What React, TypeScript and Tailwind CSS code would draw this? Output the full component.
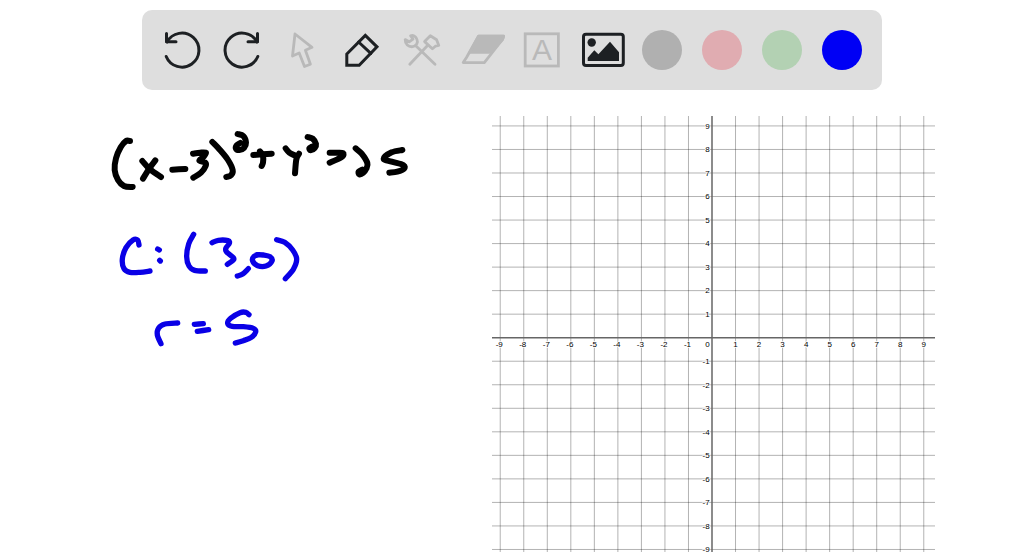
import { useState } from "react";
import type { ReactNode } from "react";

type Point = [number, number];
type Tool = { id: string; label: string; muted?: boolean; icon: ReactNode };

// --- TOOLBAR ---
const TOOLS: Tool[] = [
  {
    id: "undo",
    label: "Undo",
    icon: (
      <>
        <path d="M4.2 26.5A17 17 0 1 0 5 12" />
        <path d="M4.5 3.5v8.2H14" />
      </>
    ),
  },
  {
    id: "redo",
    label: "Redo",
    icon: (
      <>
        <path d="M35.8 26.5A17 17 0 1 1 35 12" />
        <path d="M35.5 3.5v8.2H26" />
      </>
    ),
  },
  {
    id: "select",
    label: "Select",
    muted: true,
    icon: <path d="M13 4 30 17.3 23.4 20.3 28.4 34.3 22.5 36.5 17.2 23 10.5 26Z" />,
  },
  {
    id: "pen",
    label: "Pen",
    icon: (
      <>
        <path strokeLinejoin="miter" d="M23.3 5.4 35 16.9 17.2 35.3H4.8V24Z" />
        <path d="M16.6 12 28.8 23.4" />
      </>
    ),
  },
  {
    id: "tools",
    label: "Tools",
    muted: true,
    icon: (
      <>
        <path d="M3.2 9.6C3 14 6.5 17.2 10.6 16.7C14.6 16 16.4 12.4 14.8 9C13.6 6.2 11 4.8 8.6 5.8L11 9.2L7.2 11.8Z" />
        <path d="M13.5 15.5 33 34.3" />
        <path d="M7.8 34.3 25.3 15.8" />
        <path d="M28.3 5.8 22.6 11.6 30.4 18.8 33.4 16.2 36.8 15.4 34.6 9.8Z" />
      </>
    ),
  },
  {
    id: "eraser",
    label: "Eraser",
    muted: true,
    icon: (
      <>
        <path d="M16.5 6.2H41.6L40.5 9.5 22.3 32.6H1.2L4.5 27.5Z" />
        <path fill="currentColor" d="M16.5 6.2H41.6L40.5 9.5 28.5 22.3H7.8Z" />
      </>
    ),
  },
  {
    id: "text",
    label: "Text",
    muted: true,
    icon: (
      <>
        <rect x="3.2" y="3.8" width="33.2" height="32.2" strokeLinejoin="miter" />
        <text
          x="20"
          y="30"
          textAnchor="middle"
          fontSize="30"
          fill="currentColor"
          stroke="none"
          className="font-['Liberation_Sans',sans-serif]"
        >
          A
        </text>
      </>
    ),
  },
  {
    id: "image",
    label: "Image",
    icon: (
      <>
        <rect x="1.5" y="4.3" width="39.8" height="31.2" rx="2.5" />
        <circle cx="9.7" cy="12.5" r="4.2" fill="currentColor" stroke="none" />
        <path
          fill="currentColor"
          stroke="none"
          d="M5.7 31V27.7L12.3 20.3 16.4 24.3 28 11.7 37 22.3V31Z"
        />
      </>
    ),
  },
];

const COLORS = [
  { id: "black", cls: "bg-[#b0b0b0]" },
  { id: "red", cls: "bg-[#e0acb1]" },
  { id: "green", cls: "bg-[#b3d1b3]" },
  { id: "blue", cls: "bg-[#0000f5]" },
];

function Toolbar() {
  const [color, setColor] = useState("blue");

  return (
    <header className="mx-auto flex w-fit gap-5 rounded-[10px] bg-[#dedede] p-5">
      {TOOLS.map((t) => (
        <button
          key={t.id}
          type="button"
          aria-label={t.label}
          className={t.muted ? "size-10 text-[#b9b9b9]" : "size-10 text-[#1d2023]"}
        >
          <svg
            viewBox="0 0 40 40"
            fill="none"
            stroke="currentColor"
            strokeWidth={t.muted ? 2.8 : 3}
            strokeLinecap="round"
            strokeLinejoin="round"
            className="size-10 overflow-visible"
          >
            {t.icon}
          </svg>
        </button>
      ))}
      {COLORS.map((c) => (
        <input
          key={c.id}
          type="radio"
          name="ink"
          aria-label={c.id}
          checked={color === c.id}
          onChange={() => setColor(c.id)}
          className={`size-10 appearance-none rounded-full ${c.cls}`}
        />
      ))}
    </header>
  );
}

// --- PEN STROKES (board units, 3 per pixel) ---
const BLACK: Point[][] = [
  [[90, 63], [78, 63], [62, 82], [48, 115], [44, 150], [54, 180], [72, 198], [98, 201]],
  [[127, 123], [150, 148], [183, 171]],
  [[166, 121], [148, 145], [129, 176]],
  [[217, 149], [256, 147]],
  [[279, 101], [300, 98], [318, 98], [310, 111], [298, 122], [315, 127], [317, 138], [303, 158], [280, 173]],
  [[337, 66], [360, 90], [384, 120], [398, 150], [393, 166], [379, 171]],
  [[413, 42], [430, 48], [438, 68], [432, 84], [418, 90], [408, 86], [410, 76], [421, 69]],
  [[460, 105], [515, 101]],
  [[480, 94], [489, 108], [489, 128], [485, 138]],
  [[557, 85], [568, 98], [584, 106]],
  [[597, 101], [589, 118], [585, 160]],
  [[623, 51], [638, 56], [648, 72], [644, 84], [632, 91], [628, 85], [636, 80]],
  [[689, 98], [710, 98], [729, 99], [728, 109], [712, 118], [689, 128]],
  [[767, 85], [785, 101], [802, 129], [799, 146], [789, 159], [778, 163], [776, 155], [787, 149]],
  [[907, 90], [875, 97], [851, 116], [875, 125], [910, 135], [912, 146], [892, 155], [868, 158]],
];

const BLUE: Point[][] = [
  [[117, 375], [113, 360], [99, 360], [78, 383], [67, 417], [72, 446], [90, 457], [120, 457], [150, 453]],
  [[173, 387], [178, 390]],
  [[179, 421], [181, 423]],
  [[281, 343], [266, 372], [260, 410], [267, 438], [284, 451], [316, 453]],
  [[336, 368], [355, 361], [384, 362], [388, 370], [378, 384], [379, 395], [400, 413], [399, 421], [382, 433]],
  [[412, 468], [428, 462], [445, 446]],
  [[478, 404], [462, 409], [458, 423], [473, 437], [498, 438], [516, 423], [510, 410], [490, 405], [470, 404]],
  [[530, 359], [554, 367], [578, 390], [590, 417], [580, 448], [556, 476]],
  [[183, 671], [172, 645], [176, 624], [195, 612], [233, 609]],
  [[283, 613], [310, 611]],
  [[292, 634], [326, 629]],
  [[447, 584], [438, 577], [420, 578], [392, 595], [383, 610], [397, 619], [430, 620], [460, 625], [467, 636], [454, 652], [430, 662], [406, 669]],
];

// Catmull-Rom: the curve passes through every sample of the stroke
function smooth(pts: Point[]) {
  let d = `M${pts[0][0]} ${pts[0][1]}`;
  for (let i = 0; i < pts.length - 1; i++) {
    const a = pts[i - 1] ?? pts[i];
    const b = pts[i];
    const c = pts[i + 1];
    const e = pts[i + 2] ?? c;
    d += `C${b[0] + (c[0] - a[0]) / 6} ${b[1] + (c[1] - a[1]) / 6} `;
    d += `${c[0] - (e[0] - b[0]) / 6} ${c[1] - (e[1] - b[1]) / 6} ${c[0]} ${c[1]}`;
  }
  return d;
}

function Ink() {
  return (
    <svg
      viewBox="0 0 960 720"
      fill="none"
      strokeLinecap="round"
      strokeLinejoin="round"
      role="img"
      aria-label="(x-3)²+y²=25, C: (3,0), r=5"
      className="mt-1 h-auto w-full"
    >
      <g stroke="#000000" strokeWidth="18">
        {BLACK.map((s, i) => <path key={i} d={smooth(s)} />)}
      </g>
      <g stroke="#0a00e6" strokeWidth="16">
        {BLUE.map((s, i) => <path key={i} d={smooth(s)} />)}
      </g>
    </svg>
  );
}

// --- COORDINATE PLANE ---
const W = 443;
const H = 436;
const OX = 220;
const OY = 221.7;
const STEP = 23.53;
const TICKS = Array.from({ length: 19 }, (_, i) => i - 9);

function Graph() {
  return (
    <svg
      viewBox={`0 0 ${W} ${H}`}
      role="img"
      aria-label="Coordinate plane"
      className="h-auto w-full overflow-visible"
    >
      <g stroke="#000000" strokeOpacity="0.3" strokeWidth="1">
        {TICKS.filter((n) => n !== 0).map((n) => (
          <g key={n}>
            <line x1={OX + n * STEP} x2={OX + n * STEP} y1="0" y2={H} />
            <line x1="0" x2={W} y1={OY - n * STEP} y2={OY - n * STEP} />
          </g>
        ))}
      </g>
      <g stroke="#666666" strokeWidth="1.5">
        <line x1={OX} x2={OX} y1="0" y2={H} />
        <line x1="0" x2={W} y1={OY} y2={OY} />
      </g>
      <g
        fontSize="8"
        fill="#000000"
        stroke="#ffffff"
        strokeWidth="1.5"
        paintOrder="stroke"
        className="font-['Liberation_Sans',sans-serif]"
      >
        {TICKS.map((n) => (
          <text key={n} x={n === 0 ? OX - 4.5 : OX + n * STEP - (n < 0 ? 1 : 0)} y={OY + 9} textAnchor="middle">
            {n}
          </text>
        ))}
        {TICKS.filter((n) => n !== 0).map((n) => (
          <text key={n} x={OX - 2.3} y={OY - n * STEP + 2.8} textAnchor="end">
            {n}
          </text>
        ))}
      </g>
    </svg>
  );
}

export default function App() {
  return (
    <div className="min-h-screen bg-white pt-[10px]">
      <Toolbar />
      <main className="grid grid-cols-[320fr_443fr] items-start gap-[72px] pt-[26px] pr-[89px] pl-[100px]">
        <Ink />
        <Graph />
      </main>
    </div>
  );
}
